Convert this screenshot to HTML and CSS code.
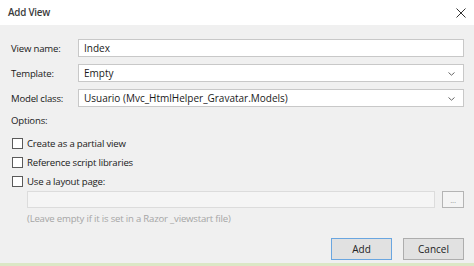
FILE: index.html
```html
<!DOCTYPE html>
<html lang="en">
  <head>
    <meta charset="UTF-8" />
    <title>Add View</title>
    <link rel="stylesheet" href="styles.css">
  </head>
  <body>
    <div class="dialog">
      <div class="titlebar">
        <span class="title">Add View</span>
        <svg class="close" width="10" height="10" viewBox="0 0 10 10">
          <path d="M0.5 0.5 L9.5 9.5 M9.5 0.5 L0.5 9.5" stroke="#333" stroke-width="1" fill="none" />
        </svg>
      </div>
      <div class="content">
        <div class="fields">
          <label class="field-label">View name:</label>
          <div class="input">Index</div>
          <label class="field-label">Template:</label>
          <div class="input select">
            <span>Empty</span>
            <svg class="chevron" width="7" height="4" viewBox="0 0 7 4"><path d="M0.5 0.5 L3.5 3.2 L6.5 0.5" stroke="#666" fill="none" /></svg>
          </div>
          <label class="field-label">Model class:</label>
          <div class="input select">
            <span>Usuario (Mvc_HtmlHelper_Gravatar.Models)</span>
            <svg class="chevron" width="7" height="4" viewBox="0 0 7 4"><path d="M0.5 0.5 L3.5 3.2 L6.5 0.5" stroke="#666" fill="none" /></svg>
          </div>
        </div>
        <div class="options-title">Options:</div>
        <div class="options">
          <div class="check"><span class="box"></span>Create as a partial view</div>
          <div class="check"><span class="box"></span>Reference script libraries</div>
          <div class="check"><span class="box"></span>Use a layout page:</div>
        </div>
        <div class="layout-row">
          <div class="input disabled"></div>
          <div class="browse">...</div>
        </div>
        <div class="hint">(Leave empty if it is set in a Razor _viewstart file)</div>
        <div class="buttons">
          <div class="button default">Add</div>
          <div class="button">Cancel</div>
        </div>
      </div>
      <div class="accent"></div>
    </div>
  </body>
</html>
```

FILE: styles.css
```css
body {
  margin: 0;
  padding: 0;
  font-family: "Open Sans", "Noto Sans", sans-serif;
  font-size: 9.6px;
  letter-spacing: -0.2px;
  color: #1a1a1a;
}

.dialog {
  display: flex;
  flex-direction: column;
  width: 474px;
  height: 266px;
  background: #f0f0f0;
}

.titlebar {
  display: flex;
  justify-content: space-between;
  align-items: center;
  height: 25px;
  padding: 0 8px 0 8px;
  background: #fff;
}

.title {
  font-size: 9.8px;
  font-weight: 600;
  color: #3a3a3a;
}

.content {
  flex: 1;
  padding: 14px 10px 0 11px;
}

.fields {
  display: grid;
  grid-template-columns: 67px 1fr;
  row-gap: 7px;
  align-items: center;
}

.input {
  display: flex;
  align-items: center;
  justify-content: space-between;
  box-sizing: border-box;
  height: 18px;
  padding: 0 8px 0 5px;
  background: #fff;
  border: 1px solid #c8c8c8;
  font-size: 10px;
  letter-spacing: 0;
}

.chevron {
  margin-top: 1px;
}

.options-title {
  margin-top: 7px;
  line-height: 14px;
}

.options {
  display: flex;
  flex-direction: column;
  gap: 5px;
  margin-top: 8px;
}

.check {
  display: flex;
  align-items: center;
  height: 14px;
}

.box {
  box-sizing: border-box;
  width: 11px;
  height: 11px;
  margin: 0 4px 0 1px;
  background: #fff;
  border: 1px solid #5a5a5a;
}

.layout-row {
  display: flex;
  gap: 7px;
  margin-top: 3px;
  padding-left: 16px;
}

.input.disabled {
  flex: 1;
  height: 17px;
  background: #f5f5f5;
  border-color: #dcdcdc;
}

.browse {
  display: flex;
  justify-content: center;
  align-items: center;
  box-sizing: border-box;
  width: 22px;
  height: 17px;
  background: #f4f4f4;
  border: 1px solid #b4b4b4;
  color: #9a9a9a;
  font-size: 8px;
  line-height: 1;
}

.hint {
  margin-top: 4px;
  padding-left: 16px;
  color: #a6a6a6;
}

.buttons {
  display: flex;
  justify-content: flex-end;
  gap: 11px;
  margin-top: 13px;
}

.button {
  display: flex;
  justify-content: center;
  align-items: center;
  box-sizing: border-box;
  width: 61px;
  height: 22px;
  background: #e1e1e1;
  border: 1px solid #adadad;
  color: #222;
  font-size: 10px;
  letter-spacing: 0;
}

.button.default {
  border: 1px solid #6aa6e0;
}

.accent {
  height: 3px;
  background: #dbe7c5;
}
```
